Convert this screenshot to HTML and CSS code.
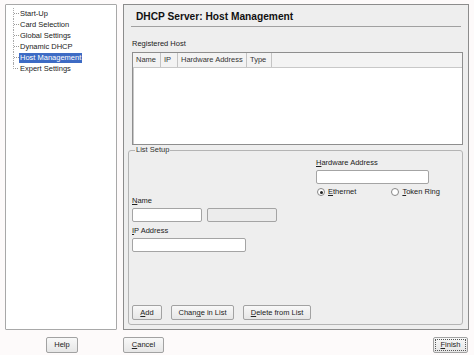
FILE: index.html
```html
<!DOCTYPE html>
<html>
<head>
<meta charset="utf-8">
<link rel="stylesheet" href="styles.css">
</head>
<body>
<div class="main">
  <div class="tree">
    <ul class="tree-list">
      <li><span>Start-Up</span></li>
      <li><span>Card Selection</span></li>
      <li><span>Global Settings</span></li>
      <li><span>Dynamic DHCP</span></li>
      <li class="sel"><span>Host Management</span></li>
      <li class="last"><span>Expert Settings</span></li>
    </ul>
  </div>
  <div class="panel">
    <div class="title">DHCP Server: Host Management</div>
    <div class="reg-label">Registered Host</div>
    <div class="table">
      <div class="thead">
        <div class="th c-name">Name</div>
        <div class="th c-ip">IP</div>
        <div class="th c-hw">Hardware Address</div>
        <div class="th c-type">Type</div>
      </div>
    </div>
    <fieldset class="setup">
      <legend>List Setup</legend>
      <div class="setup-grid">
        <div class="col-left">
          <label class="lbl"><u>N</u>ame</label>
          <div class="row2">
            <div class="input w70"></div>
            <div class="input w70 disabled"></div>
          </div>
          <label class="lbl lbl-ip"><u>I</u>P Address</label>
          <div class="input w114"></div>
        </div>
        <div class="col-right">
          <label class="lbl"><u>H</u>ardware Address</label>
          <div class="input w113"></div>
          <div class="radios">
            <span class="radio-item"><span class="radio on"></span><span><u>E</u>thernet</span></span>
            <span class="radio-item r2"><span class="radio"></span><span><u>T</u>oken Ring</span></span>
          </div>
        </div>
      </div>
      <div class="btn-row">
        <button class="btn b-add"><u>A</u>dd</button>
        <button class="btn b-change">Chan<u>g</u>e in List</button>
        <button class="btn b-del"><u>D</u>elete from List</button>
      </div>
    </fieldset>
  </div>
</div>
<div class="bottom">
  <button class="btn b-help">Help</button>
  <button class="btn b-cancel"><u>C</u>ancel</button>
  <span class="spacer"></span>
  <button class="btn b-finish focus"><u>F</u>inish</button>
</div>
</body>
</html>
```
FILE: styles.css
```css
html, body {
  margin: 0;
  padding: 0;
}
body {
  width: 474px;
  height: 355px;
  background: #fdfafa;
  font-family: "Liberation Sans", "DejaVu Sans", sans-serif;
  font-size: 7.5px;
  color: #222;
  overflow: hidden;
}
u { text-decoration: underline; }

.main {
  display: flex;
  padding: 4px 5px 0 5px;
  height: 326px;
  gap: 6px;
}
.tree {
  width: 110px;
  height: 324px;
  background: #fff;
  border: 1px solid #a8a8a8;
  border-radius: 1px;
}
.tree-list {
  list-style: none;
  margin: 0;
  padding: 3px 0 0 7px;
}
.tree-list li {
  height: 11px;
  line-height: 11px;
  padding-left: 5px;
  position: relative;
  border-left: 1px dotted #aaa;
}
.tree-list li.last {
  border-left: none;
  padding-left: 6px;
}
.tree-list li.last::after {
  content: "";
  position: absolute;
  left: 0;
  top: 0;
  height: 6px;
  border-left: 1px dotted #aaa;
}
.tree-list li::before {
  content: "";
  position: absolute;
  left: 0;
  top: 5px;
  width: 5px;
  border-top: 1px dotted #999;
}
.tree-list li span {
  padding: 0 1px;
  display: inline-block;
  line-height: 10px;
}
.tree-list li.sel span {
  background: #3d6bc4;
  color: #fff;
}

.panel {
  flex: 1;
  background: #eeeeee;
  border: 1px solid #8c8c8c;
  display: flex;
  flex-direction: column;
  padding: 0 5px 4px 4px;
}
.title {
  height: 21px;
  margin: 0 2px 0 3px;
  padding-left: 5px;
  line-height: 23px;
  font-family: "Liberation Sans", "DejaVu Sans", sans-serif;
  font-size: 10.2px;
  font-weight: bold;
  color: #111;
  border-bottom: 1px solid #a0a0a0;
}
.reg-label {
  margin: 12px 0 0 4px;
  height: 13px;
  line-height: 10px;
}
.table {
  margin-left: 4px;
  height: 91px;
  background: #fff;
  border: 1px solid #8e8e8e;
  box-shadow: inset 1px 1px 0 #c8c8c8;
}
.thead {
  display: flex;
  height: 14px;
  background: #f3f3f3;
  border-bottom: 1px solid #c8c8c8;
}
.th {
  line-height: 14px;
  padding-left: 3px;
  border-right: 1px solid #c4c4c4;
  color: #333;
}
.c-name { width: 24px; }
.c-ip { width: 13px; }
.c-hw { width: 65px; }
.c-type { width: 21px; }

.setup {
  flex: 1;
  margin: 1px 0 0 0;
  padding: 4px 4px 4px 3px;
  border: 1px solid #b4b4b4;
  border-radius: 3px;
  display: flex;
  flex-direction: column;
  min-width: 0;
}
.setup legend {
  padding: 0 1px;
  margin-left: 3px;
  font-size: 7.5px;
  color: #333;
  line-height: 8px;
}
.setup-grid {
  display: flex;
}
.col-left {
  width: 184px;
  padding-top: 38px;
  display: flex;
  flex-direction: column;
}
.col-right {
  display: flex;
  flex-direction: column;
}
.lbl {
  display: block;
  height: 10px;
  line-height: 10px;
  margin-bottom: 2px;
  color: #222;
}
.lbl-ip { margin-top: 4px; }
.row2 {
  display: flex;
  gap: 5px;
}
.input {
  height: 12px;
  background: #fff;
  border: 1px solid #a4a4a4;
  border-radius: 2px;
  box-sizing: content-box;
}
.input.disabled { background: #ececec; }
.w70 { width: 68px; }
.w114 { width: 112px; }
.w113 { width: 111px; }
.radios {
  display: flex;
  margin-top: 3px;
  padding-left: 1px;
  height: 10px;
  line-height: 10px;
}
.radio-item {
  display: flex;
  align-items: center;
  gap: 3px;
}
.radio-item.r2 { margin-left: 35px; }
.radio {
  width: 6px;
  height: 6px;
  border: 1px solid #888;
  border-radius: 50%;
  background: #fff;
  position: relative;
}
.radio.on::after {
  content: "";
  position: absolute;
  left: 1.5px;
  top: 1.5px;
  width: 3px;
  height: 3px;
  border-radius: 50%;
  background: #222;
}

.btn-row {
  margin-top: auto;
  display: flex;
  gap: 9px;
  padding-bottom: 0;
}
.btn {
  font-family: "Liberation Sans", "DejaVu Sans", sans-serif;
  font-size: 7.5px;
  color: #222;
  height: 15px;
  padding: 0;
  background: linear-gradient(#f8f8f8, #e6e6e6);
  border: 1px solid #a2a2a2;
  border-radius: 2px;
  line-height: 13px;
}
.b-add { width: 30px; }
.b-change { width: 63px; }
.b-del { width: 68px; }

.bottom {
  display: flex;
  align-items: center;
  height: 29px;
  padding: 0 6px 0 46px;
}
.b-help { width: 32px; height: 16px; }
.b-cancel { width: 41px; height: 16px; margin-left: 45px; }
.spacer { flex: 1; }
.b-finish { width: 35px; height: 16px; position: relative; }
.b-finish.focus { outline: 1px dotted #555; outline-offset: -3px; }
```
